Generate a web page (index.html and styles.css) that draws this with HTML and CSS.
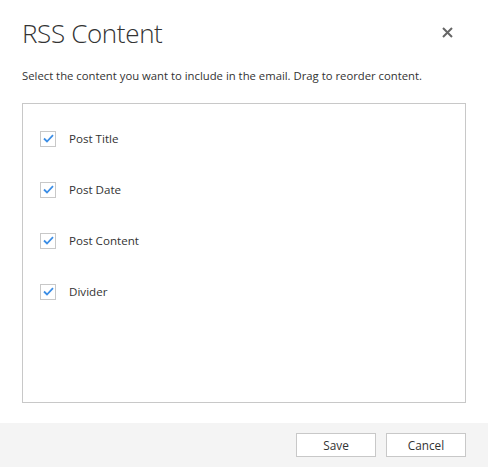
FILE: index.html
```html
<!DOCTYPE html>
<html lang="en">

<head>
    <meta charset="UTF-8">
    <meta name="viewport" content="width=device-width, initial-scale=1.0">
    <title>RSS Content</title>
    <link rel="stylesheet" href="styles.css">
</head>

<body>
    <div class="dialog">
        <header class="dialog-header">
            <h1>RSS Content</h1>
            <button type="button" class="close-btn" aria-label="Close">
                <svg width="11" height="11" viewBox="0 0 11 11">
                    <path d="M1 1 L10 10 M10 1 L1 10" stroke="#666666" stroke-width="2" fill="none" />
                </svg>
            </button>
        </header>
        <main class="dialog-body">
            <p class="intro">Select the content you want to include in the email. Drag to reorder content.</p>
            <div class="content-list">
                <label class="item">
                    <span class="check">
                        <svg width="11" height="9" viewBox="0 0 11 9">
                            <path d="M1 4.5 L4 7.5 L10 1.2" stroke="#3C8EE6" stroke-width="1.8" fill="none" />
                        </svg>
                    </span>
                    Post Title
                </label>
                <label class="item">
                    <span class="check">
                        <svg width="11" height="9" viewBox="0 0 11 9">
                            <path d="M1 4.5 L4 7.5 L10 1.2" stroke="#3C8EE6" stroke-width="1.8" fill="none" />
                        </svg>
                    </span>
                    Post Date
                </label>
                <label class="item">
                    <span class="check">
                        <svg width="11" height="9" viewBox="0 0 11 9">
                            <path d="M1 4.5 L4 7.5 L10 1.2" stroke="#3C8EE6" stroke-width="1.8" fill="none" />
                        </svg>
                    </span>
                    Post Content
                </label>
                <label class="item">
                    <span class="check">
                        <svg width="11" height="9" viewBox="0 0 11 9">
                            <path d="M1 4.5 L4 7.5 L10 1.2" stroke="#3C8EE6" stroke-width="1.8" fill="none" />
                        </svg>
                    </span>
                    Divider
                </label>
            </div>
        </main>
        <footer class="dialog-footer">
            <button type="button" class="btn">Save</button>
            <button type="button" class="btn">Cancel</button>
        </footer>
    </div>
</body>

</html>
```

FILE: styles.css
```css
/* General Styles */
body {
    margin: 0;
    font-family: 'Open Sans', 'Noto Sans', sans-serif;
    background-color: #FFFFFF;
    color: #333333;
}

.dialog {
    display: flex;
    flex-direction: column;
    height: 467px;
}

/* Header */
.dialog-header {
    display: flex;
    justify-content: space-between;
    align-items: flex-start;
    padding: 13px 22px 0 22px;
}

.dialog-header h1 {
    margin: 0;
    font-size: 26px;
    font-weight: 300;
    line-height: 40px;
    color: #333333;
    letter-spacing: -0.35px;
}

.close-btn {
    margin-top: 14px;
    margin-right: 13px;
    padding: 0;
    border: none;
    background: none;
    line-height: 0;
    cursor: pointer;
}

/* Body */
.dialog-body {
    flex: 1;
    display: flex;
    flex-direction: column;
    padding: 0 22px 20px 22px;
}

.intro {
    margin: 13px 0 0 0;
    font-size: 11.3px;
    line-height: 20px;
    color: #333333;
}

.content-list {
    flex: 1;
    margin-top: 17px;
    border: 1px solid #C8C8C8;
    padding: 9px 0 0 17px;
}

.item {
    display: flex;
    align-items: center;
    height: 51px;
    font-size: 11.6px;
    color: #333333;
}

.check {
    display: flex;
    align-items: center;
    justify-content: center;
    width: 14px;
    height: 14px;
    border: 1px solid #C8C8C8;
    margin-right: 13px;
    box-sizing: content-box;
}

/* Footer */
.dialog-footer {
    display: flex;
    justify-content: flex-end;
    gap: 10px;
    padding: 10px 22px 10px 22px;
    background-color: #F4F4F4;
}

.btn {
    width: 80px;
    height: 24px;
    padding: 0;
    font-family: 'Open Sans', 'Noto Sans', sans-serif;
    font-size: 11.8px;
    color: #333333;
    background-color: #FFFFFF;
    border: 1px solid #C8C8C8;
    cursor: pointer;
}
```
